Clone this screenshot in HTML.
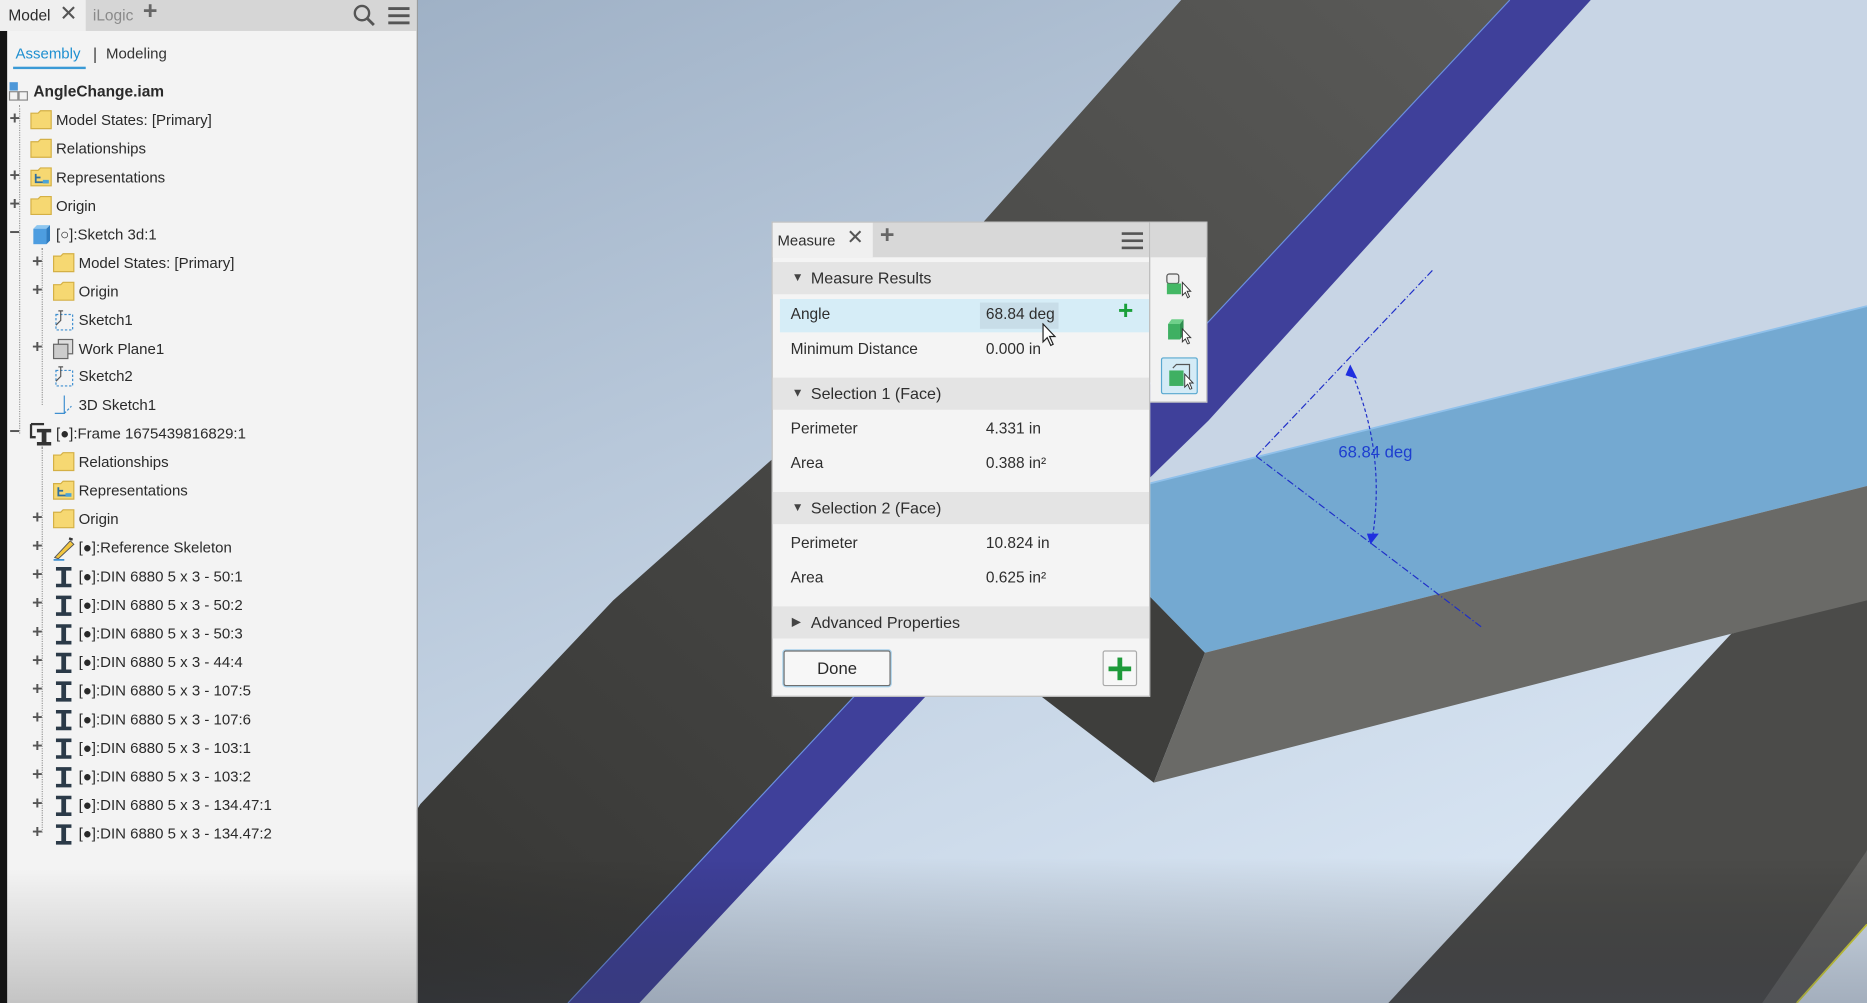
<!DOCTYPE html>
<html><head><meta charset="utf-8">
<style>
html,body{margin:0;padding:0;width:1867px;height:1003px;overflow:hidden;background:#b0c0d2}
#s{position:absolute;left:0;top:0;width:1568px;height:842px;transform:scale(1.19069,1.19121);transform-origin:0 0;font-family:"Liberation Sans",sans-serif;color:#2a2a2a}
.abs{position:absolute}
#lp{position:absolute;left:0;top:0;width:350px;height:842px;background:linear-gradient(#f3f3f3 0,#f3f3f3 730px,#c4c4c4 842px);border-right:1px solid #9a9a9a}
#lstrip{position:absolute;left:0;top:26px;width:6px;height:816px;background:#141414}
#tabs{position:absolute;left:0;top:0;width:350px;height:26px;background:#d6d6d6}
.row{position:absolute;height:20px;line-height:20px;font-size:12.6px;white-space:nowrap}
.pm{position:absolute;font-size:15px;line-height:20px;color:#555;font-weight:bold}
.ic{position:absolute;top:2px}
#dlg{position:absolute;left:648px;top:186px;width:318px;height:399px;background:#f4f4f4;border:1px solid #bdbdbd;box-sizing:border-box}
.dt{position:absolute;font-size:13.5px;line-height:18px;white-space:nowrap;color:#2e2e2e}
.sh{position:absolute;left:0;width:316px;height:27px;background:#e4e4e4}
</style></head><body>
<div id="s">
<svg class="abs" style="left:0;top:0" width="1568" height="842" viewBox="0 0 1568 842">
<defs>
<linearGradient id="bg" x1="0" y1="0" x2="0.6" y2="1">
<stop offset="0" stop-color="#9fb1c6"/><stop offset="0.55" stop-color="#c2d1e2"/><stop offset="1" stop-color="#d8e5f3"/></linearGradient>
<linearGradient id="dk" x1="1" y1="0" x2="0" y2="1">
<stop offset="0" stop-color="#5a5a58"/><stop offset="1" stop-color="#363634"/></linearGradient>
<linearGradient id="vig" x1="0" y1="0" x2="0" y2="1">
<stop offset="0" stop-color="#000" stop-opacity="0"/><stop offset="1" stop-color="#2a3040" stop-opacity="0.3"/></linearGradient>
</defs>
<rect x="350" y="0" width="1218" height="842" fill="url(#bg)"/>
<polygon points="1228,0 1568,0 1568,257 965,406" fill="#c8d5e5"/>
<polygon points="992,0 1268,0 1015,270 717,585 477,842 350,842 350,680 353,675 515,504 648,386" fill="url(#dk)"/>
<polygon points="1268,0 1336,0 1015,353 777,585 537,842 477,842 717,585 1015,270" fill="#3f409a"/>
<polyline points="1268,0 1015,270 717,585 477,842" fill="none" stroke="#6b8fe0" stroke-width="1"/>
<polygon points="900,430 965,500 1012,548 969,657 875,585 860,560" fill="#3e3e3c"/>
<polygon points="965,406 1568,257 1568,408 1012,548 965,500" fill="#74a9d1"/>
<line x1="965" y1="406" x2="1568" y2="257" stroke="#8fc0ea" stroke-width="1.5"/>
<polygon points="1012,548 1568,408 1568,510 1454,532 969,657" fill="#6a6a67"/>
<polygon points="1454,532 1568,504 1568,714 1509,842 1166,842" fill="#4b4b49"/>
<polygon points="1568,714 1568,776 1509,842 1480,842" fill="#626260"/>
<line x1="1568" y1="776" x2="1509" y2="842" stroke="#d8d83a" stroke-width="1.5"/>
<rect x="350" y="720" width="1218" height="122" fill="url(#vig)"/>
<g stroke="#1f2fc8" stroke-width="1" fill="none" stroke-dasharray="6,2,1,2">
<line x1="1055" y1="383" x2="1203" y2="227"/>
<line x1="1055" y1="383" x2="1245" y2="527"/>
<path d="M1134,310 Q1165,380 1152,455" stroke-dasharray="3,2"/>
</g>
<polygon points="1130,315 1134,306 1140,318" fill="#1f2fe0"/>
<polygon points="1148,448 1158,448 1151,457" fill="#1f2fe0"/>
<text x="1124" y="384" font-family="Liberation Sans, sans-serif" font-size="14" fill="#1d3ed0">68.84 deg</text>
</svg>

<div id="lp">
<div id="tabs">
<div class="abs" style="left:0;top:0;width:72px;height:26px;background:#efefef"></div>
<div class="abs" style="left:7px;top:5px;font-size:13px">Model</div>
<div class="abs" style="left:50px;top:1px;font-size:18px;color:#555">✕</div>
<div class="abs" style="left:78px;top:5px;font-size:13px;color:#8a8a8a">iLogic</div>
<div class="abs" style="left:120px;top:-2px;font-size:21px;color:#666;font-weight:bold">+</div>
<svg class="abs" style="left:296px;top:3px" width="20" height="20"><circle cx="8" cy="8" r="6" fill="none" stroke="#555" stroke-width="2"/><line x1="12.5" y1="12.5" x2="18" y2="18" stroke="#555" stroke-width="2.4"/></svg>
<svg class="abs" style="left:326px;top:4px" width="18" height="18"><rect x="0" y="2" width="18" height="2.4" fill="#555"/><rect x="0" y="8" width="18" height="2.4" fill="#555"/><rect x="0" y="14" width="18" height="2.4" fill="#555"/></svg>
</div>
<div id="lstrip"></div>
<div class="abs" style="left:13px;top:38px;font-size:12.6px;color:#1e8fd0">Assembly</div>
<div class="abs" style="left:11px;top:56px;width:61px;height:2px;background:#3a9ad6"></div>
<div class="abs" style="left:78px;top:37px;font-size:14px;color:#444">|</div>
<div class="abs" style="left:89px;top:38px;font-size:12.6px;color:#333">Modeling</div>
<div class="abs" style="left:16px;top:88px;width:0;height:276px;border-left:1px dotted #999"></div>
<div class="abs" style="left:35px;top:208px;width:0;height:132px;border-left:1px dotted #999"></div>
<div class="abs" style="left:35px;top:375px;width:0;height:324px;border-left:1px dotted #999"></div>
<svg class="abs" style="left:7px;top:68px" width="18" height="18"><rect x="1" y="1" width="7" height="7" fill="#4d97d8"/><rect x="1" y="9" width="7" height="7" fill="none" stroke="#888"/><rect x="9" y="9" width="7" height="7" fill="none" stroke="#888"/></svg>
<div class="row" style="left:28px;top:67px;font-weight:bold;font-size:13px">AngleChange.iam</div>
<div id="tree"></div>
</div>

<div id="dlg">
<div class="abs" style="left:0;top:0;width:316px;height:29px;background:#d8d8d8"></div>
<div class="abs" style="left:0;top:0;width:84px;height:29px;background:#f0f0f0"></div>
<div class="dt" style="left:4px;top:6px;font-size:12.5px">Measure</div>
<div class="abs" style="left:62px;top:3px;font-size:17px;color:#555">✕</div>
<div class="abs" style="left:90px;top:-1px;font-size:21px;color:#666;font-weight:bold">+</div>
<svg class="abs" style="left:293px;top:7px" width="18" height="16"><rect y="1" width="18" height="2.2" fill="#555"/><rect y="7" width="18" height="2.2" fill="#555"/><rect y="13" width="18" height="2.2" fill="#555"/></svg>
<div class="sh" style="top:33px"></div>
<div class="dt" style="left:16px;top:38px;font-size:10px;color:#444">▼</div>
<div class="dt" style="left:32px;top:38px">Measure Results</div>
<div class="abs" style="left:6px;top:64px;width:310px;height:28px;background:#d6edf7"></div>
<div class="abs" style="left:174px;top:67px;width:66px;height:22px;background:#c8dde8"></div>
<div class="dt" style="left:15px;top:68px;font-size:13px">Angle</div>
<div class="dt" style="left:179px;top:68px;font-size:13px">68.84 deg</div>
<div class="abs" style="left:290px;top:61px;font-size:22px;color:#1aa03a;font-weight:bold">+</div>
<div class="dt" style="left:15px;top:97px;font-size:13px">Minimum Distance</div>
<div class="dt" style="left:179px;top:97px;font-size:13px">0.000 in</div>
<svg class="abs" style="left:226px;top:84px" width="14" height="22"><path d="M1,1 L1,16 L4.5,12.5 L7.5,19 L9.5,18 L6.5,11.5 L11,11.5 Z" fill="#fff" stroke="#222" stroke-width="1"/></svg>
<div class="sh" style="top:130px"></div>
<div class="dt" style="left:16px;top:135px;font-size:10px;color:#444">▼</div>
<div class="dt" style="left:32px;top:135px">Selection 1 (Face)</div>
<div class="dt" style="left:15px;top:164px;font-size:13px">Perimeter</div>
<div class="dt" style="left:179px;top:164px;font-size:13px">4.331 in</div>
<div class="dt" style="left:15px;top:193px;font-size:13px">Area</div>
<div class="dt" style="left:179px;top:193px;font-size:13px">0.388 in²</div>
<div class="sh" style="top:226px"></div>
<div class="dt" style="left:16px;top:231px;font-size:10px;color:#444">▼</div>
<div class="dt" style="left:32px;top:231px">Selection 2 (Face)</div>
<div class="dt" style="left:15px;top:260px;font-size:13px">Perimeter</div>
<div class="dt" style="left:179px;top:260px;font-size:13px">10.824 in</div>
<div class="dt" style="left:15px;top:289px;font-size:13px">Area</div>
<div class="dt" style="left:179px;top:289px;font-size:13px">0.625 in²</div>
<div class="sh" style="top:322px"></div>
<div class="dt" style="left:16px;top:327px;font-size:10px;color:#444">▶</div>
<div class="dt" style="left:32px;top:327px">Advanced Properties</div>
<div class="abs" style="left:9px;top:359px;width:90px;height:30px;border:1px solid #6f6f6f;border-radius:2px;background:#f7f7f7;box-shadow:0 0 0 1px #a9d2ec;box-sizing:border-box;text-align:center;line-height:28px;font-size:14px">Done</div>
<div class="abs" style="left:277px;top:359px;width:29px;height:30px;border:1px solid #aaa;border-radius:2px;background:#f7f7f7;box-sizing:border-box"></div>
<svg class="abs" style="left:281px;top:364px" width="21" height="21"><rect x="8.5" y="1" width="4" height="19" fill="#1e9a3a"/><rect x="1" y="8.5" width="19" height="4" fill="#1e9a3a"/></svg>
</div>

<div class="abs" style="left:966px;top:186px;width:48px;height:152px;background:#f2f2f2;border:1px solid #c0c0c0;border-left:none;box-sizing:border-box">
<div class="abs" style="left:0;top:0;width:47px;height:29px;background:#d8d8d8"></div>
<svg class="abs" style="left:13px;top:42px" width="24" height="22"><rect x="1" y="1" width="10" height="8" rx="2" fill="#eee" stroke="#555"/><rect x="1" y="9" width="12" height="9" fill="#44b865"/><path d="M14,8 L14,19 L16.5,16.5 L18.5,21 L20,20 L18,15.5 L21,15.5 Z" fill="#fff" stroke="#333" stroke-width="0.8"/></svg>
<svg class="abs" style="left:13px;top:80px" width="24" height="22"><path d="M2,5 L5,1 L15,1 L12,5 Z" fill="#6fd08a"/><rect x="2" y="5" width="10" height="13" fill="#3fb062"/><path d="M12,5 L15,1 L15,14 L12,18Z" fill="#2f9050"/><path d="M14,9 L14,20 L16.5,17.5 L18.5,22 L20,21 L18,16.5 L21,16.5 Z" fill="#fff" stroke="#333" stroke-width="0.8"/></svg>
<div class="abs" style="left:9px;top:113px;width:31px;height:31px;border:1.5px solid #58a8d0;background:#d4ebf6;border-radius:2px;box-sizing:border-box"></div>
<svg class="abs" style="left:14px;top:118px" width="24" height="22"><path d="M5,4 L8,1 L19,1 L19,13" fill="none" stroke="#555"/><rect x="2" y="6" width="12" height="13" fill="#3fb062"/><path d="M15,9 L15,20 L17.5,17.5 L19.5,22 L21,21 L19,16.5 L22,16.5 Z" fill="#fff" stroke="#333" stroke-width="0.8"/></svg>
</div>
</div>

<script>
(function(){
var folder='<svg width="20" height="17"><path d="M1,3 L7,3 L9,1 L18,1 L18,16 L1,16 Z" fill="#f6d872" stroke="#d4b045"/></svg>';
var rep='<svg width="20" height="17"><path d="M1,3 L7,3 L9,1 L18,1 L18,16 L1,16 Z" fill="#f6d872" stroke="#d4b045"/><path d="M5,6 L5,13 L11,13 M5,9 L9,9" stroke="#2f6f9f" stroke-width="1.5" fill="none"/><rect x="11" y="11" width="5" height="3" fill="#4aa3d8"/></svg>';
var cube='<svg width="20" height="18"><path d="M3,4 L6,1 L17,1 L14,4Z" fill="#8cc6f0"/><rect x="3" y="4" width="11" height="13" fill="#4d9de0"/><path d="M14,4 L17,1 L17,14 L14,17Z" fill="#2f7cc0"/></svg>';
var sk='<svg width="20" height="18"><path d="M3,4 L17,4 L17,17 L3,17 Z" fill="none" stroke="#3e8fd0" stroke-dasharray="2,1.5"/><path d="M5,1 L9,1 M7,1 L7,9 L3,13" stroke="#555" fill="none"/></svg>';
var wp='<svg width="20" height="18"><rect x="5" y="1" width="12" height="12" fill="#ddd" stroke="#666"/><rect x="1" y="5" width="12" height="12" fill="#ccc" stroke="#666"/></svg>';
var s3='<svg width="20" height="18"><path d="M10,1 L10,16 L2,16" stroke="#3e8fd0" fill="none"/><path d="M10,16 L16,10" stroke="#3e8fd0" stroke-dasharray="2,1.5"/></svg>';
var frame='<svg width="22" height="20"><path d="M1,1 L12,1 M1,1 L1,12 L5,12" stroke="#333" stroke-width="2" fill="none"/><path d="M6,5 L18,5 L18,8 L14,8 L14,16 L18,16 L18,19 L6,19 L6,16 L10,16 L10,8 L6,8Z" fill="#333"/></svg>';
var ibeam='<svg width="20" height="20"><path d="M3,1 L16,1 L16,4 L11.5,4 L11.5,15 L16,15 L16,18 L3,18 L3,15 L7.5,15 L7.5,4 L3,4Z" fill="#2b3a48"/></svg>';
var skel='<svg width="20" height="20"><path d="M2,17 L15,3 L18,6 L5,18Z" fill="#f2c640" stroke="#555" stroke-width="0.8"/><path d="M1,19 L10,19" stroke="#3e8fd0" stroke-width="1.5"/><path d="M14,1 L17,2" stroke="#333" stroke-width="2"/></svg>';
var rows=[
[101,0,'+',folder,'Model States: [Primary]'],
[125,0,'',folder,'Relationships'],
[149,0,'+',rep,'Representations'],
[173,0,'+',folder,'Origin'],
[197,0,'−',cube,'[○]:Sketch 3d:1'],
[221,1,'+',folder,'Model States: [Primary]'],
[245,1,'+',folder,'Origin'],
[269,1,'',sk,'Sketch1'],
[293,1,'+',wp,'Work Plane1'],
[316,1,'',sk,'Sketch2'],
[340,1,'',s3,'3D Sketch1'],
[364,0,'−',frame,'[●]:Frame 1675439816829:1'],
[388,1,'',folder,'Relationships'],
[412,1,'',rep,'Representations'],
[436,1,'+',folder,'Origin'],
[460,1,'+',skel,'[●]:Reference Skeleton']];
var d=['50:1','50:2','50:3','44:4','107:5','107:6','103:1','103:2','134.47:1','134.47:2'];
for(var i=0;i<d.length;i++)rows.push([484+i*24,1,'+',ibeam,'[●]:DIN 6880 5 x 3 - '+d[i]]);
var h='';
rows.forEach(function(r){
 var y=r[0]-10,o=r[1]*19;
 if(r[2])h+='<div class="pm" style="left:'+(8+o)+'px;top:'+(y-1)+'px">'+r[2]+'</div>';
 h+='<div class="ic" style="position:absolute;left:'+(25+o)+'px;top:'+(y+1)+'px">'+r[3]+'</div>';
 h+='<div class="row" style="left:'+(47+o)+'px;top:'+y+'px">'+r[4]+'</div>';
});
document.getElementById('tree').innerHTML=h;
})();
</script>
</body></html>
